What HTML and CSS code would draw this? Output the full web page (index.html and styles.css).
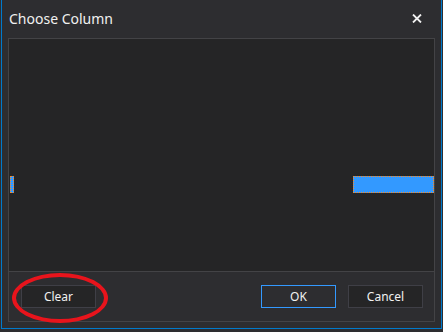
FILE: index.html
```html
<!DOCTYPE html>
<html>
<head>
<meta charset="utf-8">
<link rel="stylesheet" href="styles.css">
</head>
<body>
<div class="window">
  <div class="titlebar">
    <span class="title">Choose Column</span>
    <span class="close"><svg width="10" height="9" viewBox="0 0 10 9"><path d="M1 0.5 L9 8.5 M9 0.5 L1 8.5" stroke="#f1f1f1" stroke-width="1.8" fill="none"/></svg></span>
  </div>
  <div class="frame">
    <div class="list">
      <div class="row">
        <div class="item item-left"></div>
        <div class="item item-right"></div>
      </div>
    </div>
    <div class="buttons">
      <button class="btn">Clear</button>
      <div class="spacer"></div>
      <button class="btn btn-default">OK</button>
      <button class="btn">Cancel</button>
    </div>
    <div class="annot"></div>
  </div>
</div>
</body>
</html>
```
FILE: styles.css
```css
html, body {
  margin: 0;
  padding: 0;
  background: #2d2d30;
  width: 443px;
  height: 332px;
  overflow: hidden;
}
.window {
  box-sizing: border-box;
  width: 441px;
  height: 329px;
  margin-left: 1px;
  border: 1px solid #007acc;
  border-top: none;
  background: #2d2d30;
  display: flex;
  flex-direction: column;
  font-family: "Noto Sans", "Open Sans", sans-serif;
  color: #f1f1f1;
}
.titlebar {
  height: 38px;
  display: flex;
  align-items: center;
  padding: 0 19px 0 7px;
  box-sizing: border-box;
}
.title {
  font-size: 14px;
  flex: 1;
  margin-top: -1px;
}
.close {
  display: flex;
  margin-top: -2px;
}
.frame {
  position: relative;
  flex: 1;
  margin: 0 6px 6px 6px;
  border: 1px solid #434346;
  display: flex;
  flex-direction: column;
}
.list {
  height: 233px;
  background: #252526;
  border-bottom: 1px solid #434346;
  padding-top: 137px;
  box-sizing: border-box;
}
.row {
  display: flex;
  justify-content: space-between;
  padding-left: 1px;
}
.item {
  height: 15px;
  background: #3399ff;
  border: 1px dotted #ff8a1c;
  box-sizing: content-box;
}
.item-left { width: 2px; }
.item-right { width: 79px; }
.buttons {
  display: flex;
  padding: 13px 11px 0 12px;
  gap: 12px;
}
.spacer { flex: 1; }
.btn {
  width: 75px;
  height: 23px;
  box-sizing: border-box;
  background: #252526;
  border: 1px solid #3f3f46;
  color: #f1f1f1;
  font-family: "Noto Sans", "Open Sans", sans-serif;
  font-size: 12px;
  padding: 0;
  line-height: 20px;
}
.btn-default {
  background: #2d2d30;
  border-color: #3399ff;
}
.annot {
  position: absolute;
  left: 3px;
  top: 234px;
  width: 96px;
  height: 50px;
  box-sizing: border-box;
  border: 4px solid #e8141c;
  border-radius: 50%;
}
```
